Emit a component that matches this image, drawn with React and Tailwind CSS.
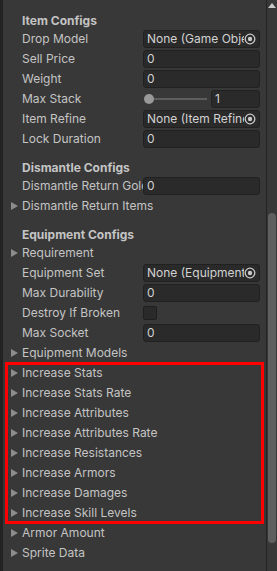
import React from 'react';

// Little grey foldout arrow
function Arrow() {
    return (
        <svg width="7" height="8" viewBox="0 0 7 8" className="shrink-0">
            <path d="M0 0 L7 4 L0 8 Z" fill="#8c8c8c" />
        </svg>
    );
}

function PickerIcon() {
    return (
        <svg width="12" height="12" viewBox="0 0 12 12">
            <circle cx="6" cy="6" r="4.8" fill="none" stroke="#c8c8c8" strokeWidth="1.3" />
            <circle cx="6" cy="6" r="2.2" fill="#c8c8c8" />
        </svg>
    );
}

function Label({ children }) {
    return (
        <div className="w-[121px] shrink-0 overflow-hidden whitespace-nowrap">{children}</div>
    );
}

function Row({ label, children }) {
    return (
        <div className="h-[20px] flex items-center pl-[19px] pr-[6px]">
            <Label>{label}</Label>
            <div className="flex-1 min-w-0 flex items-center">{children}</div>
        </div>
    );
}

function TextField({ value }) {
    return (
        <div className="flex-1 min-w-0 h-[18px] bg-[#2a2a2a] border border-[#212121] rounded-[3px] px-[3px] flex items-center text-[#d2d2d2] overflow-hidden whitespace-nowrap">
            {value}
        </div>
    );
}

function ObjectField({ value }) {
    return (
        <div className="flex-1 min-w-0 h-[18px] bg-[#2a2a2a] border border-[#212121] rounded-[3px] flex items-center text-[#d2d2d2] overflow-hidden">
            <div className="flex-1 min-w-0 pl-[3px] overflow-hidden whitespace-nowrap">{value}</div>
            <div className="w-[15px] shrink-0 flex items-center justify-start">
                <PickerIcon />
            </div>
        </div>
    );
}

function Foldout({ label }) {
    return (
        <div className="h-[20px] flex items-center pl-[8px] gap-[4px] whitespace-nowrap">
            <Arrow />
            <span>{label}</span>
        </div>
    );
}

function Header({ children, first }) {
    return (
        <div className={`h-[17px] flex items-center pl-[19px] font-bold ${first ? '' : 'mt-[10px]'}`}>
            {children}
        </div>
    );
}

export default function App() {
    const increases = [
        'Increase Stats',
        'Increase Stats Rate',
        'Increase Attributes',
        'Increase Attributes Rate',
        'Increase Resistances',
        'Increase Armors',
        'Increase Damages',
        'Increase Skill Levels',
    ];

    return (
        <div
            className="w-[277px] h-[571px] bg-[#383838] flex overflow-hidden text-[12px] text-[#c4c4c4]"
            style={{ fontFamily: 'Inter, "Noto Sans", sans-serif' }}
        >
            {/* left edge */}
            <div className="w-[3px] shrink-0 bg-[#232323]" />

            {/* inspector content */}
            <div className="flex-1 min-w-0 pt-[12px]">
                <Header first>Item Configs</Header>
                <Row label="Drop Model"><ObjectField value="None (Game Object)" /></Row>
                <Row label="Sell Price"><TextField value="0" /></Row>
                <Row label="Weight"><TextField value="0" /></Row>
                <Row label="Max Stack">
                    <div className="w-[68px] shrink-0 relative h-[18px] flex items-center">
                        <div className="absolute left-[5px] right-[4px] h-[2px] bg-[#5e5e5e]" />
                        <div className="relative ml-[1px] w-[10px] h-[10px] rounded-full bg-[#999999]" />
                    </div>
                    <TextField value="1" />
                </Row>
                <Row label="Item Refine"><ObjectField value="None (Item Refine)" /></Row>
                <Row label="Lock Duration"><TextField value="0" /></Row>

                <Header>Dismantle Configs</Header>
                <Row label="Dismantle Return Gold"><TextField value="0" /></Row>
                <Foldout label="Dismantle Return Items" />

                <Header>Equipment Configs</Header>
                <Foldout label="Requirement" />
                <Row label="Equipment Set"><ObjectField value="None (Equipment Set)" /></Row>
                <Row label="Max Durability"><TextField value="0" /></Row>
                <Row label="Destroy If Broken">
                    <div className="w-[14px] h-[14px] bg-[#2a2a2a] border border-[#1f1f1f] rounded-[2px]" />
                </Row>
                <Row label="Max Socket"><TextField value="0" /></Row>
                <Foldout label="Equipment Models" />

                <div className="relative">
                    {increases.map((name) => (
                        <Foldout key={name} label={name} />
                    ))}
                    {/* red highlight frame */}
                    <div className="absolute -top-[1px] -bottom-[1px] left-[2px] right-[2px] border-[3px] border-[#ff0000] pointer-events-none" />
                </div>

                <Foldout label="Armor Amount" />
                <Foldout label="Sprite Data" />
            </div>

            {/* scrollbar */}
            <div className="w-[11px] shrink-0 border-l border-[#232323] flex flex-col items-center">
                <svg width="8" height="5" viewBox="0 0 8 5" className="mt-[3px]">
                    <path d="M4 0 L8 5 L0 5 Z" fill="#c8c8c8" />
                </svg>
                <div className="mt-[205px] w-[8px] h-[330px] rounded-full bg-[#5f5f5f]" />
            </div>
        </div>
    );
}
